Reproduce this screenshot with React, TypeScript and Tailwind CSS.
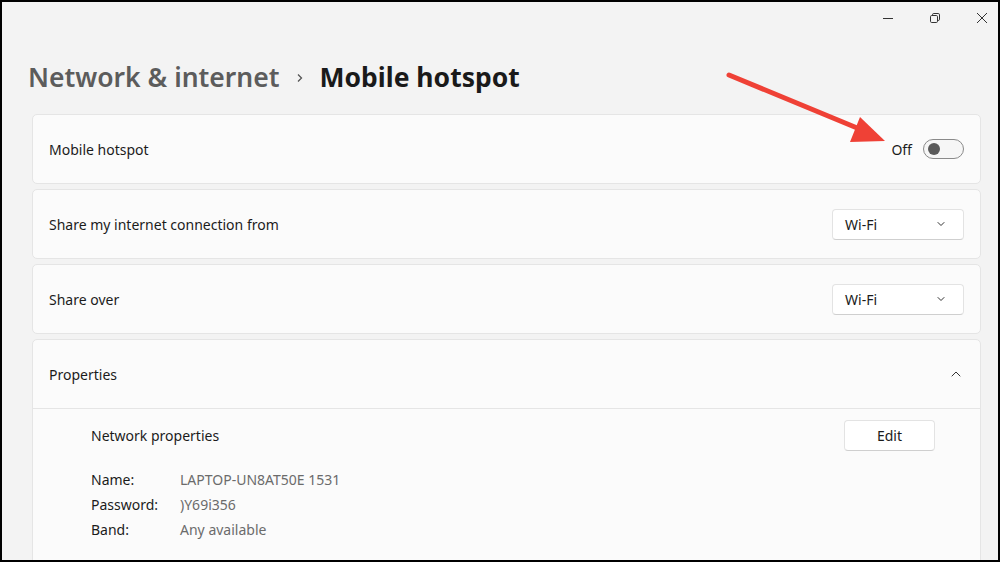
import React from 'react';

const font = { fontFamily: '"Noto Sans", "Open Sans", sans-serif' };

const Chevron: React.FC<{ up?: boolean }> = ({ up }) => (
  <svg width="12" height="12" viewBox="0 0 12 12" fill="none" stroke="#333" strokeWidth="1" strokeLinecap="round" strokeLinejoin="round">
    {up ? <path d="M2 8 L6 4 L10 8" /> : <path d="M3 4.5 L6 7.5 L9 4.5" />}
  </svg>
);

const Dropdown: React.FC<{ value: string }> = ({ value }) => (
  <div className="flex h-[31px] w-[132px] items-center justify-between rounded-[4px] border border-[#e3e3e3] border-b-[#cfcfcf] bg-white pl-3 pr-4 text-[14px] text-[#1b1b1b]">
    <span>{value}</span>
    <Chevron />
  </div>
);

const Card: React.FC<{ children: React.ReactNode }> = ({ children }) => (
  <div className="flex h-[70px] items-center justify-between rounded-[5px] border border-[#e5e5e5] bg-[#fbfbfb] pl-4 pr-4 text-[14px] text-[#1b1b1b]">
    {children}
  </div>
);

const App: React.FC = () => {
  const props = [
    ['Name:', 'LAPTOP-UN8AT50E 1531'],
    ['Password:', ')Y69i356'],
    ['Band:', 'Any available'],
  ];

  return (
    <div className="relative h-[562px] w-[1000px] overflow-hidden border-2 border-black bg-[#f3f3f3]" style={font}>
      {/* title bar */}
      <div className="flex h-[32px] items-center justify-end gap-[15px] text-[#1b1b1b]">
        <div className="flex w-[32px] justify-center">
          <svg width="12" height="12" viewBox="0 0 12 12"><path d="M1 6.5 H11" stroke="#333" strokeWidth="1" /></svg>
        </div>
        <div className="flex w-[32px] justify-center">
          <svg width="12" height="12" viewBox="0 0 12 12" fill="none" stroke="#333" strokeWidth="1">
            <rect x="1.5" y="3.5" width="7" height="7" rx="1.2" />
            <path d="M3.5 3.5 V2.8 A1.3 1.3 0 0 1 4.8 1.5 H9.2 A1.3 1.3 0 0 1 10.5 2.8 V7.2 A1.3 1.3 0 0 1 9.2 8.5 H8.5" />
          </svg>
        </div>
        <div className="flex w-[32px] justify-center">
          <svg width="12" height="12" viewBox="0 0 12 12"><path d="M1 1 L11 11 M11 1 L1 11" stroke="#333" strokeWidth="1" /></svg>
        </div>
      </div>

      {/* breadcrumb */}
      <div className="flex h-[80px] items-center pl-[26px] pt-[8px] text-[26.5px]">
        <span className="font-semibold text-[#5c5c5c]">Network &amp; internet</span>
        <span className="mx-[15px] flex items-center">
          <svg width="10" height="12" viewBox="0 0 10 12" fill="none" stroke="#555" strokeWidth="1.3">
            <path d="M3 2.5 L6.5 6 L3 9.5" />
          </svg>
        </span>
        <span className="font-bold text-[#1a1a1a]">Mobile hotspot</span>
      </div>

      <div className="flex w-[979px] flex-col gap-[5px] pl-[30px]">
        <Card>
          <span>Mobile hotspot</span>
          <div className="flex items-center gap-[11px]">
            <span>Off</span>
            <div className="flex h-[20px] w-[41px] items-center rounded-full border border-[#8a8a8a] bg-[#f6f6f6] pl-[4px]">
              <div className="h-[12px] w-[12px] rounded-full bg-[#5a5a5a]" />
            </div>
          </div>
        </Card>
        <Card>
          <span>Share my internet connection from</span>
          <Dropdown value="Wi-Fi" />
        </Card>
        <Card>
          <span>Share over</span>
          <Dropdown value="Wi-Fi" />
        </Card>
        <div className="rounded-[5px] border border-[#e5e5e5] bg-[#fbfbfb] text-[14px] text-[#1b1b1b]">
          <div className="flex h-[69px] items-center justify-between border-b border-[#e5e5e5] pl-4 pr-[18px]">
            <span>Properties</span>
            <Chevron up />
          </div>
          <div className="pl-[58px] pr-[45px] pt-[11px]">
            <div className="flex items-center justify-between">
              <span>Network properties</span>
              <div className="flex h-[31px] w-[91px] items-center justify-center rounded-[4px] border border-[#e3e3e3] border-b-[#cfcfcf] bg-white">
                Edit
              </div>
            </div>
            <div className="mt-[18px] flex flex-col gap-[5px]">
              {props.map(([k, v]) => (
                <div key={k} className="flex h-[20px] items-center">
                  <span className="w-[89px]">{k}</span>
                  <span className="text-[#6b6b6b]">{v}</span>
                </div>
              ))}
            </div>
            <div className="h-[40px]" />
          </div>
        </div>
      </div>

      {/* red annotation arrow */}
      <svg className="pointer-events-none absolute left-0 top-0" width="1000" height="562">
        <line x1="727" y1="73" x2="860" y2="128" stroke="#ef4136" strokeWidth="5" strokeLinecap="round" />
        <polygon points="848,140 883,139 858,115" fill="#ef4136" />
      </svg>
    </div>
  );
};

export default App;
